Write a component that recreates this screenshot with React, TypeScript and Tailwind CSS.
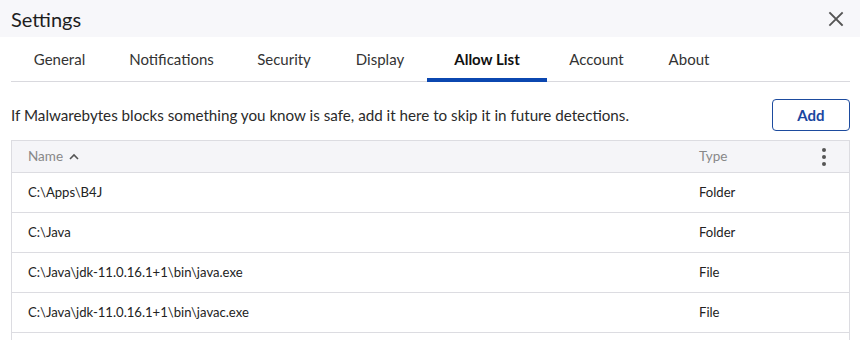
import React from "react";

const tabs = [
  { label: "General", w: "w-[97px]" },
  { label: "Notifications", w: "w-[127px]" },
  { label: "Security", w: "w-[98px]" },
  { label: "Display", w: "w-[94px]" },
  { label: "Allow List", w: "w-[120px]" },
  { label: "Account", w: "w-[99px]" },
  { label: "About", w: "w-[86px]" },
];
const rows = [
  { name: "C:\\Apps\\B4J", type: "Folder" },
  { name: "C:\\Java", type: "Folder" },
  { name: "C:\\Java\\jdk-11.0.16.1+1\\bin\\java.exe", type: "File" },
  { name: "C:\\Java\\jdk-11.0.16.1+1\\bin\\javac.exe", type: "File" },
  { name: "", type: "" },
];

export default function App() {
  return (
    <div className="w-[860px] h-[340px] overflow-hidden bg-white text-[#222]" style={{ fontFamily: "Lato, 'Open Sans', sans-serif" }}>
      <div className="h-[37px] bg-[#f7f7fa] flex items-center justify-between pl-[11px] pr-[16px]">
        <span className="text-[20px] text-[#1e1e1e] leading-none">Settings</span>
        <svg width="16" height="16" viewBox="0 0 16 16" className="text-[#555]">
          <path d="M2 2 L14 14 M14 2 L2 14" stroke="currentColor" strokeWidth="1.8" strokeLinecap="square" />
        </svg>
      </div>
      <div className="ml-[11px] mr-[10px] flex border-b border-[#d9d9de] h-[45px]">
        {tabs.map((t) => {
          const active = t.label === "Allow List";
          return (
            <div
              key={t.label}
              className={`${t.w} flex items-center justify-center text-[15px] relative ${active ? "font-bold text-[#111] text-[15.5px]" : "text-[#333]"}`}
            >
              {t.label}
              {active && <div className="absolute left-0 right-0 bottom-[-1px] h-[4px] bg-[#0b47b0]" />}
            </div>
          );
        })}
      </div>
      <div className="flex items-center justify-between pl-[11px] pr-[10px] pt-[17px] pb-[9px]">
        <span className="text-[15.2px] text-[#2a2a2a]">
          If Malwarebytes blocks something you know is safe, add it here to skip it in future detections.
        </span>
        <button className="w-[78px] h-[32px] rounded-[4px] border border-[#1d4b9e] text-[#1a46a0] font-bold text-[15px] bg-white">
          Add
        </button>
      </div>
      <div className="ml-[11px] mr-[10px] border border-[#dcdce1]">
        <div className="h-[32px] bg-[#f5f5f8] flex items-center border-b border-[#dcdce1] text-[13.5px] text-[#888]">
          <div className="flex-1 pl-[16px] flex items-center gap-[6px]">
            Name
            <svg width="10" height="7" viewBox="0 0 10 7">
              <path d="M1 6 L5 2 L9 6" fill="none" stroke="#555" strokeWidth="1.6" />
            </svg>
          </div>
          <div className="w-[150px] flex items-center justify-between pr-[23px]">
            <span>Type</span>
            <div className="flex flex-col items-center gap-[3px]">
              <span className="w-[4px] h-[4px] rounded-full bg-[#555]" />
              <span className="w-[4px] h-[4px] rounded-full bg-[#555]" />
              <span className="w-[4px] h-[4px] rounded-full bg-[#555]" />
            </div>
          </div>
        </div>
        {rows.map((r, i) => (
          <div key={i} className="h-[40px] flex items-center border-b border-[#dcdce1] text-[13.1px] text-[#222]">
            <div className="flex-1 pl-[16px]">{r.name}</div>
            <div className="w-[150px]">{r.type}</div>
          </div>
        ))}
      </div>
    </div>
  );
}
